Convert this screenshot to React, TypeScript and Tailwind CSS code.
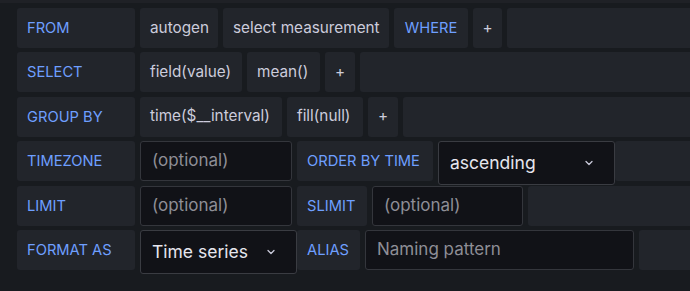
import { ChevronDown } from "lucide-react";

const font = { fontFamily: "Inter, 'Noto Sans', sans-serif" };

function Label({ text, w }: { text: string; w: string }) {
    return (
        <div className={`${w} shrink-0 h-full flex items-center pl-[10px] rounded-[3px] bg-[#22252b] text-[#6e9fff] text-[14.7px]`}>
            {text}
        </div>
    );
}

function Seg({ text, w, center }: { text: string; w: string; center?: boolean }) {
    return (
        <div className={`${w} shrink-0 h-full flex items-center ${center ? "justify-center" : "pl-[10px]"} rounded-[3px] bg-[#22252b] text-[#ccccdc] text-[15.3px]`}>
            {text}
        </div>
    );
}

function Filler() {
    return <div className="flex-1 h-full rounded-[3px] bg-[#22252b] -mr-4" />;
}

function Input({ placeholder, w }: { placeholder: string; w: string }) {
    return (
        <div className={`${w} shrink-0 h-full flex items-center pl-[11px] rounded-[3px] bg-[#111217] border border-[#34363c] text-[#8e8e96] text-[17px]`}>
            {placeholder}
        </div>
    );
}

function Select({ value, w }: { value: string; w: string }) {
    return (
        <div className={`${w} shrink-0 self-start h-[44px] -mr-[5px] flex items-center justify-between pl-[11px] pr-[19px] rounded-[3px] bg-[#111217] border border-[#3a3c42] text-[#e6e6ee] text-[17.5px] relative z-10`}>
            <span>{value}</span>
            <ChevronDown className="h-[12px] w-[12px] text-[#ccccdc]" strokeWidth={2.5} />
        </div>
    );
}

export default function App() {
    return (
        <div className="w-[690px] h-[291px] overflow-hidden bg-[#181b1f]" style={font}>
            <div className="h-[3px] bg-[#1f2126]" />
            <div className="flex flex-col gap-[4.4px] pt-[5px] pl-[17px]">
                <div className="flex gap-[5px] h-[40px]">
                    <Label text="FROM" w="w-[118px]" />
                    <Seg text="autogen" w="w-[78px]" />
                    <Seg text="select measurement" w="w-[166px]" />
                    <div className="w-[74px] shrink-0 h-full flex items-center justify-center rounded-[3px] bg-[#22252b] text-[#6e9fff] text-[14.7px]">WHERE</div>
                    <Seg text="+" w="w-[29px]" center />
                    <Filler />
                </div>
                <div className="flex gap-[5px] h-[40px]">
                    <Label text="SELECT" w="w-[118px]" />
                    <Seg text="field(value)" w="w-[102px]" />
                    <Seg text="mean()" w="w-[73px]" />
                    <Seg text="+" w="w-[30px]" center />
                    <Filler />
                </div>
                <div className="flex gap-[5px] h-[40px]">
                    <Label text="GROUP BY" w="w-[118px]" />
                    <Seg text="time($__interval)" w="w-[142px]" />
                    <Seg text="fill(null)" w="w-[76px]" />
                    <Seg text="+" w="w-[30px]" center />
                    <Filler />
                </div>
                <div className="flex gap-[5px] h-[40px]">
                    <Label text="TIMEZONE" w="w-[118px]" />
                    <Input placeholder="(optional)" w="w-[152px]" />
                    <Label text="ORDER BY TIME" w="w-[136px]" />
                    <Select value="ascending" w="w-[177px]" />
                    <Filler />
                </div>
                <div className="flex gap-[5px] h-[40px]">
                    <Label text="LIMIT" w="w-[118px]" />
                    <Input placeholder="(optional)" w="w-[152px]" />
                    <Label text="SLIMIT" w="w-[70px]" />
                    <Input placeholder="(optional)" w="w-[151px]" />
                    <Filler />
                </div>
                <div className="flex gap-[5px] h-[40px]">
                    <Label text="FORMAT AS" w="w-[118px]" />
                    <Select value="Time series" w="w-[157px]" />
                    <Label text="ALIAS" w="w-[63px]" />
                    <Input placeholder="Naming pattern" w="w-[269px]" />
                    <Filler />
                </div>
            </div>
        </div>
    );
}
